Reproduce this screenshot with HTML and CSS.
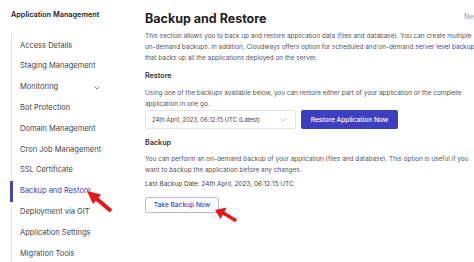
FILE: index.html
```html
<!DOCTYPE html>
<html lang="en">
<head>
<meta charset="UTF-8">
<meta name="viewport" content="width=device-width, initial-scale=1.0">
<title>Backup and Restore</title>
<link rel="stylesheet" href="styles.css">
</head>
<body>

<div class="page">
    <aside class="sidebar">
        <div class="side-title">Application Management</div>
        <ul class="side-nav">
            <li>Access Details</li>
            <li>Staging Management</li>
            <li class="has-sub">Monitoring
                <svg class="chev" width="6" height="4" viewBox="0 0 6 4"><path d="M0.8 0.8 L3 3 L5.2 0.8" fill="none" stroke="#777" stroke-width="0.9"/></svg>
            </li>
            <li>Bot Protection</li>
            <li>Domain Management</li>
            <li>Cron Job Management</li>
            <li>SSL Certificate</li>
            <li class="active">Backup and Restore</li>
            <li>Deployment via GIT</li>
            <li>Application Settings</li>
            <li>Migration Tools</li>
        </ul>
    </aside>

    <main class="content">
        <div class="top-link">New</div>
        <h1>Backup and Restore</h1>
        <p class="intro">This section allows you to back up and restore application data (files and database). You can create multiple<br>
        on-demand backups. In addition, Cloudways offers option for scheduled and on-demand <a href="#">server level backup</a><br>
        that backs up all the applications deployed on the server.</p>

        <h2 class="restore-title">Restore</h2>
        <p>Using one of the backups available below, you can restore either part of your application or the complete<br>
        application in one go.</p>
        <div class="restore-row">
            <div class="select">
                <span>24th April, 2023, 06:12:15 UTC (Latest)</span>
                <svg width="6" height="4" viewBox="0 0 6 4"><path d="M0.8 0.8 L3 3 L5.2 0.8" fill="none" stroke="#bbb" stroke-width="0.8"/></svg>
            </div>
            <button class="btn-primary">Restore Application Now</button>
        </div>

        <h2 class="backup-title">Backup</h2>
        <p>You can perform an on-demand backup of your application (files and database). This option is useful if you<br>
        want to backup the application before any changes.</p>
        <div class="last-date">Last Backup Date: 24th April, 2023, 06:12:15 UTC</div>
        <button class="btn-outline">Take Backup Now</button>
    </main>
</div>

<svg class="marks" width="474" height="262" viewBox="0 0 474 262">
    <polygon fill="#e8151b" points="87,191 101,194.5 98.5,197.8 112.3,209.5 109.7,212.5 95.7,200.8 93,204"/>
    <polygon fill="#e8151b" points="215,210 226.5,207.6 224.5,211.8 237,219.3 235.3,222.3 222.8,214.8 220.5,219"/>
</svg>

</body>
</html>
```

FILE: styles.css
```css
body {
    margin: 0;
    width: 474px;
    height: 262px;
    overflow: hidden;
    background: #fff;
    font-family: 'Inter', 'Noto Sans', sans-serif;
    color: #555;
    position: relative;
}
.page {
    display: flex;
}
.sidebar {
    width: 140px;
    flex-shrink: 0;
    padding-top: 10px;
}
.side-title {
    margin-left: 11px;
    font-size: 7.3px;
    font-weight: 600;
    color: #222;
    line-height: 10px;
    white-space: nowrap;
}
.side-nav {
    list-style: none;
    margin: 13px 0 0 11px;
    padding: 2.6px 0 0 0;
    width: 92px;
    border-left: 1px solid #e8e8e8;
}
.side-nav li {
    height: 20.8px;
    line-height: 20.8px;
    padding-left: 8px;
    font-size: 7.5px;
    color: #444;
    white-space: nowrap;
}
.side-nav li.has-sub {
    display: flex;
    justify-content: space-between;
    align-items: center;
    padding-right: 4px;
}
.side-nav li.active {
    color: #3e40b8;
    border-left: 3px solid #4547c0;
    margin-left: -2px;
    padding-left: 7px;
}
.content {
    flex: 1;
    padding-left: 5px;
    padding-top: 11px;
    position: relative;
    white-space: nowrap;
}
.top-link {
    position: absolute;
    top: 12px;
    left: 324px;
    font-size: 7px;
    color: #999;
}
h1 {
    margin: 0;
    font-size: 12.5px;
    font-weight: 700;
    color: #222;
    line-height: 16px;
}
p {
    margin: 0;
    font-size: 6.4px;
    line-height: 11px;
    color: #555;
}
.intro {
    margin-top: 3.5px;
}
a {
    color: #3a3db8;
    text-decoration: none;
}
h2 {
    margin: 0;
    font-size: 7.2px;
    font-weight: 600;
    color: #333;
    line-height: 10px;
}
.restore-title {
    margin-top: 7.5px;
    margin-bottom: 6.5px;
}
.restore-row {
    display: flex;
    gap: 5px;
    margin-top: 0.5px;
}
.select {
    width: 151px;
    height: 19px;
    box-sizing: border-box;
    border: 1px solid #e4e4e4;
    border-radius: 2px;
    display: flex;
    align-items: center;
    justify-content: space-between;
    padding: 0 9px 0 6px;
    font-size: 5.9px;
    color: #444;
}
.btn-primary {
    width: 97px;
    height: 19px;
    border: none;
    border-radius: 2px;
    background: #3b3fc0;
    color: #fff;
    font-family: inherit;
    font-size: 6.6px;
    font-weight: 500;
    padding: 0;
}
.backup-title {
    margin-top: 9px;
    margin-bottom: 5.5px;
}
.last-date {
    margin-top: 3.5px;
    font-size: 6.4px;
    color: #444;
    line-height: 10px;
}
.btn-outline {
    display: block;
    margin-top: 8px;
    width: 74px;
    height: 16px;
    border: 1px solid #b9bae8;
    border-radius: 2px;
    background: #fff;
    color: #3e40b8;
    font-family: inherit;
    font-size: 6.6px;
    font-weight: 500;
    padding: 0;
}
.marks {
    position: absolute;
    top: 0;
    left: 0;
    pointer-events: none;
}
```
